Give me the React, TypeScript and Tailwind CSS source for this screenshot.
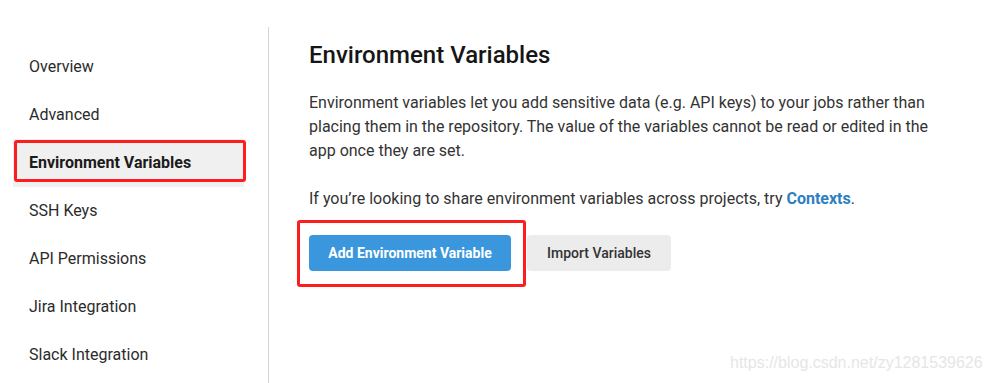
import React from 'react';

const items = [
  'Overview',
  'Advanced',
  'Environment Variables',
  'SSH Keys',
  'API Permissions',
  'Jira Integration',
  'Slack Integration',
];

export default function App() {
  return (
    <div
      className="relative w-[989px] h-[383px] overflow-hidden bg-white text-[#333]"
      style={{ fontFamily: 'Roboto, "Liberation Sans", sans-serif' }}
    >
      <div className="flex h-full pt-[27px]">
        {/* sidebar */}
        <div className="w-[269px] shrink-0 border-r border-[#d4d4d4] pt-[16px]">
          {items.map((label) => {
            const active = label === 'Environment Variables';
            return (
              <div
                key={label}
                className={
                  active
                    ? 'ml-[13px] w-[231px] h-[48px] flex items-center pl-[16px] bg-[#f0f0f0] font-bold text-[16px] text-[#1b1b1b]'
                    : 'ml-[13px] w-[231px] h-[48px] flex items-center pl-[16px] text-[16px] text-[#2b2b2b]'
                }
              >
                {label}
              </div>
            );
          })}
        </div>

        {/* content */}
        <div className="pl-[40px] pt-[12px]">
          <h1 className="text-[24px] leading-[32px] font-medium text-[#161616]">Environment Variables</h1>
          <p className="mt-[20px] w-[630px] text-[16px] leading-[24px] text-[#333]">
            Environment variables let you add sensitive data (e.g. API keys) to your jobs rather than placing them in the
            repository. The value of the variables cannot be read or edited in the app once they are set.
          </p>
          <p className="mt-[24px] text-[16px] leading-[24px] text-[#333]">
            If you’re looking to share environment variables across projects, try{' '}
            <a className="font-bold text-[#2c7fc3]">Contexts</a>.
          </p>
          <div className="mt-[24px] flex gap-[16px]">
            <button className="w-[202px] h-[36px] rounded-[4px] bg-[#3a97dd] text-white text-[14px] font-bold">
              Add Environment Variable
            </button>
            <button className="w-[144px] h-[36px] rounded-[4px] bg-[#ececec] text-[#333] text-[14px] font-medium">
              Import Variables
            </button>
          </div>
        </div>
      </div>

      {/* annotation boxes */}
      <div className="absolute left-[14px] top-[140px] w-[232px] h-[42px] border-[3px] border-[#fa1e1e] rounded-[3px]" />
      <div className="absolute left-[297px] top-[220px] w-[229px] h-[67px] border-[3px] border-[#fa1e1e] rounded-[3px]" />

      {/* watermark */}
      <div
        className="absolute left-[730px] top-[353px] text-[16px] leading-[20px] text-[#e6e6e6]"
        style={{ fontFamily: '"Liberation Sans", Arial, sans-serif' }}
      >
        https://blog.csdn.net/zy1281539626
      </div>
    </div>
  );
}
